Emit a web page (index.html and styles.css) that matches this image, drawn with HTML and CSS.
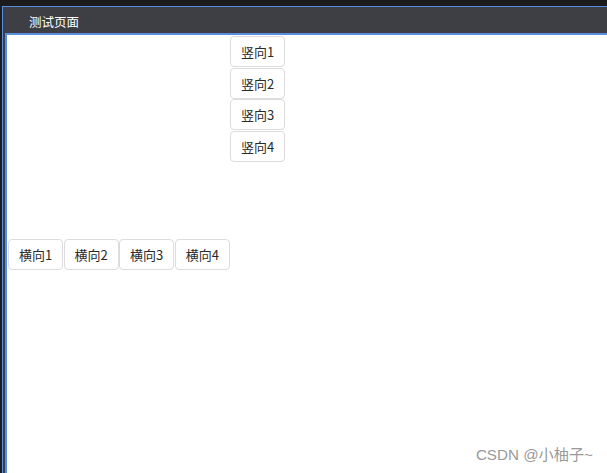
FILE: index.html
```html
<!DOCTYPE html>
<html lang="zh">
<head>
<meta charset="utf-8">
<link rel="stylesheet" href="styles.css">
</head>
<body>
<div class="window">
  <div class="titlebar"><span class="title">测试页面</span></div>
  <div class="content">
    <div class="vstack">
      <div class="btn">竖向1</div>
      <div class="btn">竖向2</div>
      <div class="btn">竖向3</div>
      <div class="btn">竖向4</div>
    </div>
    <div class="hstack">
      <div class="btn">横向1</div>
      <div class="btn">横向2</div>
      <div class="btn">横向3</div>
      <div class="btn">横向4</div>
    </div>
    <div class="watermark">CSDN @小柚子~</div>
  </div>
</div>
</body>
</html>
```
FILE: styles.css
```css
html, body {
  margin: 0;
  padding: 0;
  width: 607px;
  height: 473px;
  overflow: hidden;
  background: #1c1c1e;
  font-family: "Noto Sans CJK SC", "Noto Sans", sans-serif;
}
.window {
  position: relative;
  margin: 6px 0 0 2px;
  height: 467px;
  border-top: 1px solid #5a8ee0;
  border-left: 1px solid #5a8ee0;
  background: #3d3f45;
  padding-left: 2px;
  box-sizing: border-box;
  display: flex;
  flex-direction: column;
}
.titlebar {
  height: 26px;
  display: flex;
  align-items: center;
  padding-left: 24px;
  flex: none;
}
.title {
  color: #ffffff;
  font-size: 12.5px;
  line-height: 1;
  margin-top: 4px;
}
.content {
  flex: 1;
  background: #ffffff;
  border-top: 2px solid #5a8ee0;
  border-left: 2px solid #5a8ee0;
  padding: 1px 0 0 1px;
  position: relative;
}
.btn {
  width: 55px;
  height: 31px;
  box-sizing: border-box;
  border: 1px solid #dcdcdc;
  border-radius: 4px;
  background: #ffffff;
  color: #2a2a2a;
  font-size: 13px;
  display: flex;
  align-items: center;
  justify-content: center;
}
.vstack {
  margin-left: 222px;
  display: flex;
  flex-direction: column;
  gap: 0.5px;
}
.hstack {
  margin-top: 77px;
  display: flex;
  gap: 0.6px;
}
.watermark {
  position: absolute;
  right: 14px;
  bottom: 9px;
  color: #9a9a9a;
  font-size: 15.2px;
  font-family: "Liberation Sans", "Noto Sans CJK SC", sans-serif;
}
```
